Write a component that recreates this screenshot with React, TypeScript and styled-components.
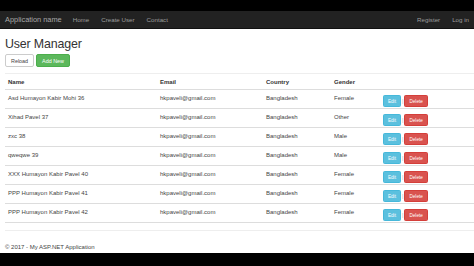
import * as React from 'react';
import styled, { createGlobalStyle } from 'styled-components';

const DocStyle = createGlobalStyle`
  html,
  body {
    margin: 0;
    padding: 0;
    background: #fff;
    color: #333;
    font-family: 'Liberation Sans', Arial, sans-serif;
  }
  #root {
    height: 266px;
  }
`;

const Page = styled.div`
  display: flex;
  flex-direction: column;
  height: 266px;
  overflow: hidden;
`;

const Letterbox = styled.div<{ $h: number }>`
  flex: 0 0 ${p => p.$h}px;
  background: #000;
`;

const Navbar = styled.nav`
  height: 17px;
  background: #222;
  border-bottom: 1px solid #111;
  display: flex;
  align-items: center;
  padding: 0 5px;
`;

const Brand = styled.span`
  color: #a8a8a8;
  font-size: 7.4px;
  margin-right: 5px;
`;

const NavLinks = styled.div<{ $right?: boolean }>`
  display: flex;
  margin-left: ${p => (p.$right ? 'auto' : '0')};
`;

const NavLink = styled.span`
  color: #9d9d9d;
  font-size: 6.2px;
  padding: 0 6px;
  &:last-child {
    padding-right: 0;
  }
`;

const Body = styled.main`
  flex: 1;
  padding-left: 5px;
  display: flex;
  flex-direction: column;
`;

const Title = styled.h2`
  margin: 8px 0 3px;
  font-size: 12.4px;
  font-weight: 400;
  letter-spacing: -0.15px;
  line-height: 14px;
  color: #333;
`;

const Toolbar = styled.div`
  display: flex;
  gap: 2px;
  margin-bottom: 6px;
`;

const Button = styled.button<{ $kind?: 'default' | 'success' }>`
  height: 13px;
  padding: 0 5px;
  font-family: inherit;
  font-size: 5.4px;
  border-radius: 2px;
  border: 1px solid ${p => (p.$kind === 'success' ? '#4cae4c' : '#ccc')};
  background: ${p => (p.$kind === 'success' ? '#5cb85c' : '#fff')};
  color: ${p => (p.$kind === 'success' ? '#fff' : '#444')};
`;

const Table = styled.table`
  width: 469px;
  table-layout: fixed;
  border-collapse: collapse;
  font-size: 6px;
`;

const Th = styled.th<{ $w?: number }>`
  width: ${p => (p.$w ? `${p.$w}px` : 'auto')};
  text-align: left;
  font-weight: 700;
  padding: 0 3px;
  height: 15px;
  border-top: 1px solid #eee;
  border-bottom: 1px solid #ddd;
  color: #333;
`;

const Row = styled.tr`
  height: 19px;
  border-bottom: 1px solid #ddd;
`;

const Td = styled.td`
  vertical-align: top;
  padding: 4px 3px 0;
  line-height: 9px;
  color: #444;
  white-space: nowrap;
`;

const Actions = styled.div`
  display: flex;
  align-items: center;
  margin-top: 1px;
`;

const SmallButton = styled.span<{ $kind: 'info' | 'danger' }>`
  display: inline-flex;
  align-items: center;
  justify-content: center;
  height: 10px;
  padding: 0 4px;
  font-size: 4.6px;
  border-radius: 1.5px;
  color: #fff;
  background: ${p => (p.$kind === 'info' ? '#5bc0de' : '#d9534f')};
  border: 1px solid ${p => (p.$kind === 'info' ? '#46b8da' : '#d43f3a')};
`;

const Pipe = styled.span`
  color: #bbb;
  font-size: 6px;
  margin: 0 1px;
`;

const Rule = styled.hr`
  width: 469px;
  margin: 7px 0 0;
  border: 0;
  border-top: 1px solid #eee;
`;

const Footer = styled.footer`
  font-size: 6px;
  color: #444;
  margin-top: 13px;
`;

const users = [
  ['Asd Humayon Kabir Mohi 36', 'Female'],
  ['Xihad Pavel 37', 'Other'],
  ['zxc 38', 'Male'],
  ['qweqwe 39', 'Male'],
  ['XXX Humayon Kabir Pavel 40', 'Female'],
  ['PPP Humayon Kabir Pavel 41', 'Female'],
  ['PPP Humayon Kabir Pavel 42', 'Female'],
];

export default function App() {
  return (
    <>
      <DocStyle />
      <Page>
        <Letterbox $h={11} />
        <Navbar>
          <Brand>Application name</Brand>
          <NavLinks>
            <NavLink>Home</NavLink>
            <NavLink>Create User</NavLink>
            <NavLink>Contact</NavLink>
          </NavLinks>
          <NavLinks $right>
            <NavLink>Register</NavLink>
            <NavLink>Log in</NavLink>
          </NavLinks>
        </Navbar>
        <Body>
          <Title>User Manager</Title>
          <Toolbar>
            <Button>Reload</Button>
            <Button $kind="success">Add New</Button>
          </Toolbar>
          <Table>
            <thead>
              <tr>
                <Th $w={146}>Name</Th>
                <Th $w={100}>Email</Th>
                <Th $w={62}>Country</Th>
                <Th $w={43}>Gender</Th>
                <Th />
              </tr>
            </thead>
            <tbody>
              {users.map(([name, gender]) => (
                <Row key={name}>
                  <Td>{name}</Td>
                  <Td>hkpaveli@gmail.com</Td>
                  <Td>Bangladesh</Td>
                  <Td>{gender}</Td>
                  <Td>
                    <Actions>
                      <SmallButton $kind="info">Edit</SmallButton>
                      <Pipe>|</Pipe>
                      <SmallButton $kind="danger">Delete</SmallButton>
                    </Actions>
                  </Td>
                </Row>
              ))}
            </tbody>
          </Table>
          <Rule />
          <Footer>© 2017 - My ASP.NET Application</Footer>
        </Body>
        <Letterbox $h={13} />
      </Page>
    </>
  );
}
